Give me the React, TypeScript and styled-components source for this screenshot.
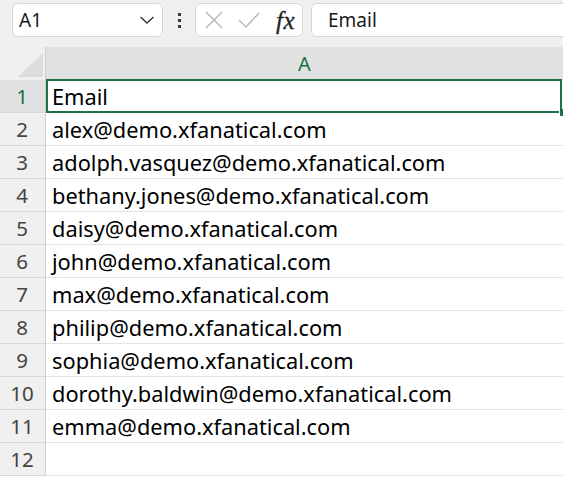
import React from "react";
import styled, { createGlobalStyle } from "styled-components";

const Global = createGlobalStyle`
  html, body { margin: 0; padding: 0; background: #f0f0f0; overflow: hidden; }
  body { font-family: "Noto Sans", "Open Sans", sans-serif; }
`;

const Page = styled.div`
  width: 563px;
  height: 477px;
  overflow: hidden;
  display: flex;
  flex-direction: column;
`;

const Toolbar = styled.div`
  height: 47px;
  flex: none;
  box-sizing: border-box;
  padding: 3px 0 0 12px;
  display: flex;
  align-items: flex-start;
  background: #f0f0f0;
`;

const Box = styled.div<{ $w?: number; $grow?: boolean }>`
  height: 34px;
  box-sizing: border-box;
  background: #ffffff;
  border: 1px solid #d6d6d6;
  border-radius: 6px;
  display: flex;
  align-items: center;
  ${(p) => (p.$w ? `width: ${p.$w}px; flex: none;` : "")}
  ${(p) => (p.$grow ? "flex: 1; margin-right: -10px;" : "")}
`;

const NameBox = styled(Box)`
  padding: 0 7px 0 6px;
  justify-content: space-between;
`;

const NameText = styled.span`
  font-size: 19px;
  color: #1a1a1a;
  line-height: 1;
`;

const Dots = styled.div`
  width: 32px;
  height: 34px;
  flex: none;
  display: flex;
  flex-direction: column;
  align-items: center;
  justify-content: center;
  gap: 3px;
`;

const Dot = styled.span`
  width: 3px;
  height: 3px;
  background: #3a3a3a;
`;

const FxButtons = styled(Box)`
  padding: 0 6px 0 8px;
  gap: 14px;
  margin-right: 8px;
`;

const Fx = styled.span`
  font-family: "Liberation Serif", "DejaVu Serif", serif;
  font-style: italic;
  font-size: 25px;
  color: #222;
  line-height: 1;
  margin-left: 2px;
  letter-spacing: 0.5px;
  -webkit-text-stroke: 0.3px #222;
`;

const FormulaText = styled.span`
  font-size: 19px;
  color: #1a1a1a;
  padding-left: 16px;
  line-height: 1;
`;

const Sheet = styled.div`
  display: grid;
  grid-template-columns: 46px 1fr;
  grid-template-rows: 33px;
  grid-auto-rows: 33px;
  align-content: start;
  background: #fff;
  flex: 1;
`;

const Corner = styled.div`
  background: #f0f0f0;
  border-right: 1px solid #cfcfcf;
  position: relative;
  box-sizing: border-box;
`;

const CornerTri = styled.div`
  position: absolute;
  right: 2px;
  bottom: 3px;
  width: 0;
  height: 0;
  border-style: solid;
  border-width: 0 0 24px 25px;
  border-color: transparent transparent #dcdcdc transparent;
`;

const ColHeader = styled.div`
  background: #e1e1e1;
  display: flex;
  align-items: center;
  justify-content: center;
  font-size: 20px;
  color: #1d6f42;
  box-sizing: border-box;
`;

const RowHeader = styled.div<{ $active?: boolean }>`
  background: ${(p) => (p.$active ? "#e1e1e1" : "#f0f0f0")};
  color: ${(p) => (p.$active ? "#1d6f42" : "#444")};
  border-right: 1px solid #cfcfcf;
  border-bottom: 1px solid #d8d8d8;
  box-sizing: border-box;
  display: flex;
  align-items: center;
  justify-content: center;
  font-size: 20.5px;
  padding-right: 1px;
`;

const Cell = styled.div`
  position: relative;
  border-bottom: 1px solid #e2e2e2;
  box-sizing: border-box;
  display: flex;
  align-items: center;
  padding-left: 6px;
  font-size: 21.8px;
  color: #000;
  white-space: nowrap;
`;

const Selection = styled.div`
  position: absolute;
  left: 0;
  top: -1px;
  right: 1px;
  bottom: -1px;
  border: 2px solid #1e7145;
  pointer-events: none;
`;

const Handle = styled.div`
  position: absolute;
  right: -5px;
  bottom: -5px;
  width: 5px;
  height: 7px;
  background: #1e7145;
  border-left: 1px solid #fff;
`;

const rows = [
  "Email",
  "alex@demo.xfanatical.com",
  "adolph.vasquez@demo.xfanatical.com",
  "bethany.jones@demo.xfanatical.com",
  "daisy@demo.xfanatical.com",
  "john@demo.xfanatical.com",
  "max@demo.xfanatical.com",
  "philip@demo.xfanatical.com",
  "sophia@demo.xfanatical.com",
  "dorothy.baldwin@demo.xfanatical.com",
  "emma@demo.xfanatical.com",
  "",
];

export default function App() {
  return (
    <Page>
      <Global />
      <Toolbar>
        <NameBox $w={151}>
          <NameText>A1</NameText>
          <svg width="16" height="10" viewBox="0 0 16 10">
            <polyline points="1.5,2 8,8 14.5,2" fill="none" stroke="#333" strokeWidth="1.4" />
          </svg>
        </NameBox>
        <Dots>
          <Dot />
          <Dot />
          <Dot />
        </Dots>
        <FxButtons $w={108}>
          <svg width="20" height="20" viewBox="0 0 20 20">
            <path d="M2 2 L18 18 M18 2 L2 18" stroke="#b4b4b4" strokeWidth="1.4" fill="none" />
          </svg>
          <svg width="22" height="16" viewBox="0 0 22 16">
            <polyline points="1,8 8,15 21,1" stroke="#b4b4b4" strokeWidth="1.4" fill="none" />
          </svg>
          <Fx>fx</Fx>
        </FxButtons>
        <Box $grow>
          <FormulaText>Email</FormulaText>
        </Box>
      </Toolbar>
      <Sheet>
        <Corner>
          <CornerTri />
        </Corner>
        <ColHeader>A</ColHeader>
        {rows.map((r, i) => (
          <React.Fragment key={i}>
            <RowHeader $active={i === 0}>{i + 1}</RowHeader>
            <Cell>
              {r}
              {i === 0 && (
                <Selection>
                  <Handle />
                </Selection>
              )}
            </Cell>
          </React.Fragment>
        ))}
      </Sheet>
    </Page>
  );
}
